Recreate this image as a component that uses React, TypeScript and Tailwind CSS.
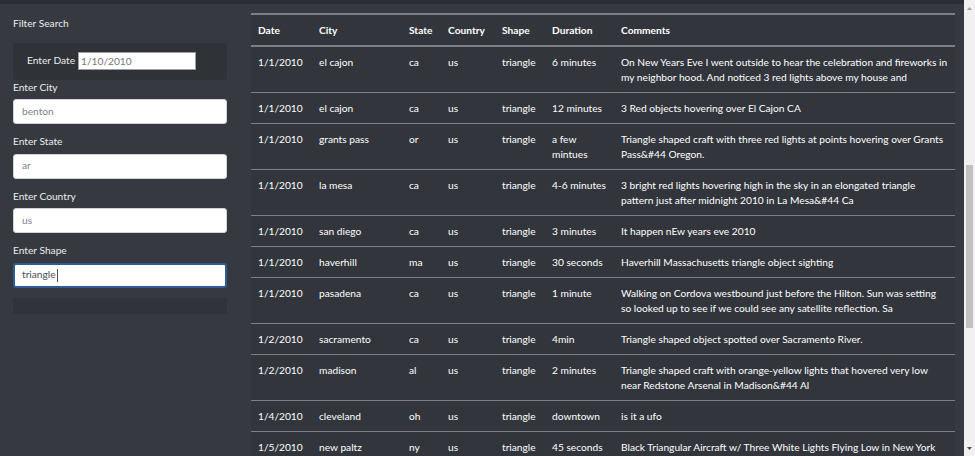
import React from "react"

type Sighting = {
  date: string
  city: string
  state: string
  country: string
  shape: string
  duration: string
  comments: string
}

const ROWS: Sighting[] = [
  { date: "1/1/2010", city: "el cajon", state: "ca", country: "us", shape: "triangle", duration: "6 minutes", comments: "On New Years Eve I went outside to hear the celebration and fireworks in my neighbor hood. And noticed 3 red lights above my house and" },
  { date: "1/1/2010", city: "el cajon", state: "ca", country: "us", shape: "triangle", duration: "12 minutes", comments: "3 Red objects hovering over El Cajon CA" },
  { date: "1/1/2010", city: "grants pass", state: "or", country: "us", shape: "triangle", duration: "a few mintues", comments: "Triangle shaped craft with three red lights at points hovering over Grants Pass&#44 Oregon." },
  { date: "1/1/2010", city: "la mesa", state: "ca", country: "us", shape: "triangle", duration: "4-6 minutes", comments: "3 bright red lights hovering high in the sky in an elongated triangle pattern just after midnight 2010 in La Mesa&#44 Ca" },
  { date: "1/1/2010", city: "san diego", state: "ca", country: "us", shape: "triangle", duration: "3 minutes", comments: "It happen nEw years eve 2010" },
  { date: "1/1/2010", city: "haverhill", state: "ma", country: "us", shape: "triangle", duration: "30 seconds", comments: "Haverhill Massachusetts triangle object sighting" },
  { date: "1/1/2010", city: "pasadena", state: "ca", country: "us", shape: "triangle", duration: "1 minute", comments: "Walking on Cordova westbound just before the Hilton. Sun was setting so looked up to see if we could see any satellite reflection. Sa" },
  { date: "1/2/2010", city: "sacramento", state: "ca", country: "us", shape: "triangle", duration: "4min", comments: "Triangle shaped object spotted over Sacramento River." },
  { date: "1/2/2010", city: "madison", state: "al", country: "us", shape: "triangle", duration: "2 minutes", comments: "Triangle shaped craft with orange-yellow lights that hovered very low near Redstone Arsenal in Madison&#44 Al" },
  { date: "1/4/2010", city: "cleveland", state: "oh", country: "us", shape: "triangle", duration: "downtown", comments: "is it a ufo" },
  { date: "1/5/2010", city: "new paltz", state: "ny", country: "us", shape: "triangle", duration: "45 seconds", comments: "Black Triangular Aircraft w/ Three White Lights Flying Low in New York" },
]

const HEADERS = ["Date", "City", "State", "Country", "Shape", "Duration", "Comments"]
const WIDTHS = [61, 90, 39, 54, 50, 69, 341]

/**
 * 左のフィルタ欄
 */
function FilterPanel() {
  return (
    <aside className="w-[240px] shrink-0 px-[13px] pt-[12px] leading-[15.5px] text-[#e9ecef]">
      <h5>Filter Search</h5>

      <div className="mt-[11px] flex h-[37px] items-center rounded-[2px] border border-[#30343a] bg-[#2f3338] pl-[13px]">
        <label className="mr-[3px]">Enter Date</label>
        <input
          className="h-[18px] w-[118px] border border-[#9aa0a6] bg-white px-[2px] text-[#757575] outline-none placeholder:text-[#757575]"
          placeholder="1/10/2010"
          readOnly
        />
      </div>

      <Field label="Enter City" placeholder="benton" />
      <Field label="Enter State" placeholder="ar" />
      <Field label="Enter Country" placeholder="us" />
      <Field label="Enter Shape" value="triangle" focused />

      <div className="h-[16px] rounded-[2px] border border-[#30343a] bg-[#30343a]" />
    </aside>
  )
}

function Field({ label, placeholder, value, focused }: { label: string; placeholder?: string; value?: string; focused?: boolean }) {
  return (
    <div>
      <label className="block">{label}</label>
      <div
        className={
          focused
            ? "mt-[4px] mb-[10px] flex h-[25px] items-center rounded-[3px] border-2 border-[#2d5d97] bg-white pl-[7px] text-[#495057]"
            : "mt-[4px] mb-[10px] flex h-[25px] items-center rounded-[3px] border border-[#ced4da] bg-white pl-[8px] text-[#7b8188]"
        }
      >
        <span>{value ?? placeholder}</span>
        {focused && <span className="ml-[1px] h-[13px] w-px bg-[#495057]" />}
      </div>
    </div>
  )
}

/**
 * 目撃情報テーブル
 */
function SightingsTable() {
  return (
    <section className="min-w-0 flex-1 pl-[11px] pr-[9px] pt-[9px]">
      <table className="w-full table-fixed border-collapse bg-[#32363c] leading-[15px] text-white">
        <colgroup>
          {WIDTHS.map((w, i) => (
            <col key={i} style={{ width: w }} />
          ))}
        </colgroup>
        <thead>
          <tr className="border-t-2 border-b-2 border-[#7c8084]">
            {HEADERS.map((h) => (
              <th key={h} className="px-[7px] py-[7.5px] text-left align-top font-bold">
                {h}
              </th>
            ))}
          </tr>
        </thead>
        <tbody>
          {ROWS.map((r, i) => (
            <tr key={i} className="border-b border-[#7c8084]">
              <td className="px-[7px] py-[7.5px] align-top">{r.date}</td>
              <td className="px-[7px] py-[7.5px] align-top">{r.city}</td>
              <td className="px-[7px] py-[7.5px] align-top">{r.state}</td>
              <td className="px-[7px] py-[7.5px] align-top">{r.country}</td>
              <td className="px-[7px] py-[7.5px] align-top">{r.shape}</td>
              <td className="px-[7px] py-[7.5px] align-top">{r.duration}</td>
              <td className="px-[7px] py-[7.5px] align-top">{r.comments}</td>
            </tr>
          ))}
        </tbody>
      </table>
    </section>
  )
}

/**
 * ページ右端のスクロールバー（見た目だけ）
 */
function FakeScrollbar() {
  return (
    <div className="relative w-[11px] shrink-0 bg-[#f1f1f1]">
      <svg className="absolute left-[3px] top-[7px]" width="5" height="3" viewBox="0 0 5 3">
        <path d="M2.5 0 L5 3 L0 3 Z" fill="#a3a3a3" />
      </svg>
      <div className="absolute left-[2px] right-[2px] top-[165px] h-[163px] bg-[#c1c1c1]" />
      <svg className="absolute bottom-[6px] left-[3px]" width="5" height="3" viewBox="0 0 5 3">
        <path d="M0 0 L5 0 L2.5 3 Z" fill="#505050" />
      </svg>
    </div>
  )
}

export default function App() {
  return (
    <div
      className="flex h-[456px] w-[975px] overflow-hidden bg-[#363a40] text-[10.2px]"
      style={{ fontFamily: '"Segoe UI", Lato, "Open Sans", sans-serif' }}
    >
      <div className="flex min-w-0 flex-1 flex-col">
        <div className="h-[4px] shrink-0 bg-[#2a2d31]" />
        <div className="flex min-h-0 flex-1">
          <FilterPanel />
          <SightingsTable />
        </div>
      </div>
      <FakeScrollbar />
    </div>
  )
}
